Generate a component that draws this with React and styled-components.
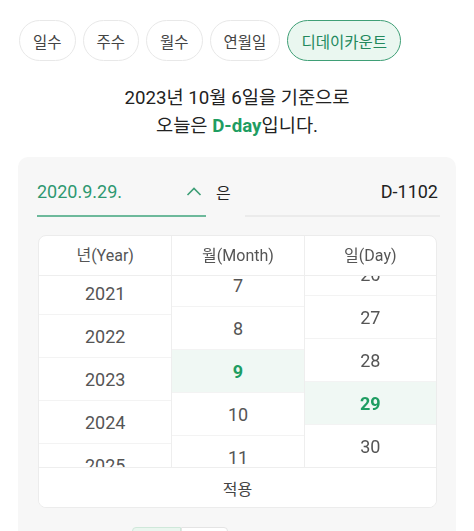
import { useLayoutEffect, useRef } from "react";
import styled, { createGlobalStyle } from "styled-components";

const ROW = 43;

const GlobalStyle = createGlobalStyle`
  body {
    margin: 0;
    background: #fff;
    font-family: Roboto, "Noto Sans CJK KR", sans-serif;
    color: #222;
  }
`;

const Page = styled.div`
  width: 474px;
  height: 531px;
  overflow: hidden;
`;

const Tabs = styled.div`
  display: flex;
  gap: 7px;
  padding: 20px 0 0 19px;
`;

const Tab = styled.button`
  height: 41px;
  padding: 0 13px;
  border-radius: 21px;
  border: 1px solid ${(p) => (p.$active ? "#3f9f76" : "#e8e8e8")};
  background: ${(p) => (p.$active ? "#eaf7f0" : "#fff")};
  color: ${(p) => (p.$active ? "#23895d" : "#444")};
  font-family: inherit;
  font-size: 15.5px;
  cursor: pointer;
`;

const Title = styled.p`
  margin: 23px 0 0;
  text-align: center;
  font-size: 18.7px;
  line-height: 28px;
  color: #222;
`;

const Green = styled.b`
  color: #1f9d62;
  font-weight: 700;
`;

const Card = styled.div`
  margin: 17px 18px 0;
  padding: 15px 19px 0 19px;
  background: #f7f7f7;
  border-radius: 10px;
  height: 400px;
`;

const InputRow = styled.div`
  display: flex;
  align-items: stretch;
  height: 45px;
  margin-right: -3px;
`;

const DateField = styled.div`
  width: 169px;
  display: flex;
  align-items: center;
  justify-content: space-between;
  border-bottom: 2px solid #6db99b;
  color: #2e9870;
  font-size: 18px;
  padding: 0 4px 4px 0;
  box-sizing: border-box;
`;

const Particle = styled.span`
  display: flex;
  align-items: center;
  padding: 0 14px 5px 10px;
  font-size: 16px;
  color: #222;
`;

const ResultField = styled.div`
  flex: 1;
  display: flex;
  align-items: center;
  justify-content: flex-end;
  padding: 0 2px 4px 0;
  border-bottom: 2px solid #ebebeb;
  font-size: 18px;
  color: #222;
`;

const Picker = styled.div`
  margin: 18px 0 0 1px;
  background: #fff;
  border: 1px solid #ececec;
  border-radius: 8px;
  overflow: hidden;
`;

const Grid = styled.div`
  display: grid;
  grid-template-columns: repeat(3, 1fr);
`;

const Column = styled.div`
  & + & {
    border-left: 1px solid #eeeeee;
  }
`;

const Header = styled.div`
  height: 40px;
  display: flex;
  align-items: center;
  justify-content: center;
  padding-bottom: 3px;
  box-sizing: border-box;
  border-bottom: 1px solid #eeeeee;
  font-size: 16px;
  color: #555;
`;

const Scroller = styled.div`
  height: 191px;
  overflow-y: scroll;
  scrollbar-width: none;
  &::-webkit-scrollbar {
    display: none;
  }
`;

const Item = styled.div`
  height: ${ROW}px;
  box-sizing: border-box;
  display: flex;
  align-items: center;
  justify-content: center;
  border-bottom: 1px solid #f3f3f3;
  font-size: 18px;
  background: ${(p) => (p.$selected ? "#f0f8f4" : "#fff")};
  color: ${(p) => (p.$selected ? "#1f9d62" : "#555")};
  font-weight: ${(p) => (p.$selected ? 700 : 400)};
`;

const Apply = styled.button`
  width: 100%;
  height: 40px;
  border: 0;
  border-top: 1px solid #eeeeee;
  background: #fff;
  font-family: inherit;
  font-size: 16px;
  color: #444;
`;

const Segments = styled.div`
  display: flex;
  margin: 19px 0 0 95px;
`;

const Segment = styled.button`
  width: ${(p) => (p.$active ? 49 : 47)}px;
  height: 32px;
  border: 1px solid ${(p) => (p.$active ? "#cfe8da" : "#e4e4e4")};
  border-radius: ${(p) => (p.$active ? "4px 0 0 0" : "0 4px 0 0")};
  background: ${(p) => (p.$active ? "#eaf6ef" : "#fff")};
`;

const ChevronUp = () => (
  <svg width="16" height="9" viewBox="0 0 16 9" fill="none">
    <path d="M1.5 8 L8 1.5 L14.5 8" stroke="#3d9e76" strokeWidth="1.6" />
  </svg>
);

const WheelColumn = ({ label, items, selected, scroll }) => {
  const ref = useRef(null);
  useLayoutEffect(() => {
    if (ref.current) ref.current.scrollTop = scroll;
  }, [scroll]);

  return (
    <Column>
      <Header>{label}</Header>
      <Scroller ref={ref}>
        {items.map((v) => (
          <Item key={v} $selected={v === selected}>
            {v}
          </Item>
        ))}
      </Scroller>
    </Column>
  );
};

const range = (a, b) => Array.from({ length: b - a + 1 }, (_, i) => a + i);

const tabs = ["일수", "주수", "월수", "연월일", "디데이카운트"];

export default function App() {
  const years = range(2015, 2030);
  const months = range(1, 12);
  const days = range(1, 30);

  return (
    <Page>
      <GlobalStyle />
      <Tabs>
        {tabs.map((t) => (
          <Tab key={t} $active={t === "디데이카운트"}>
            {t}
          </Tab>
        ))}
      </Tabs>

      <Title>
        2023년 10월 6일을 기준으로
        <br />
        오늘은 <Green>D-day</Green>입니다.
      </Title>

      <Card>
        <InputRow>
          <DateField>
            2020.9.29.
            <ChevronUp />
          </DateField>
          <Particle>은</Particle>
          <ResultField>D-1102</ResultField>
        </InputRow>

        <Picker>
          <Grid>
            <WheelColumn label="년(Year)" items={years} selected={2020} scroll={years.indexOf(2023) * ROW - 82} />
            <WheelColumn label="월(Month)" items={months} selected={9} scroll={months.indexOf(9) * ROW - 74} />
            <WheelColumn label="일(Day)" items={days} selected={29} scroll={days.indexOf(29) * ROW - 106} />
          </Grid>
          <Apply>적용</Apply>
        </Picker>

        <Segments>
          <Segment $active />
          <Segment />
        </Segments>
      </Card>
    </Page>
  );
}
